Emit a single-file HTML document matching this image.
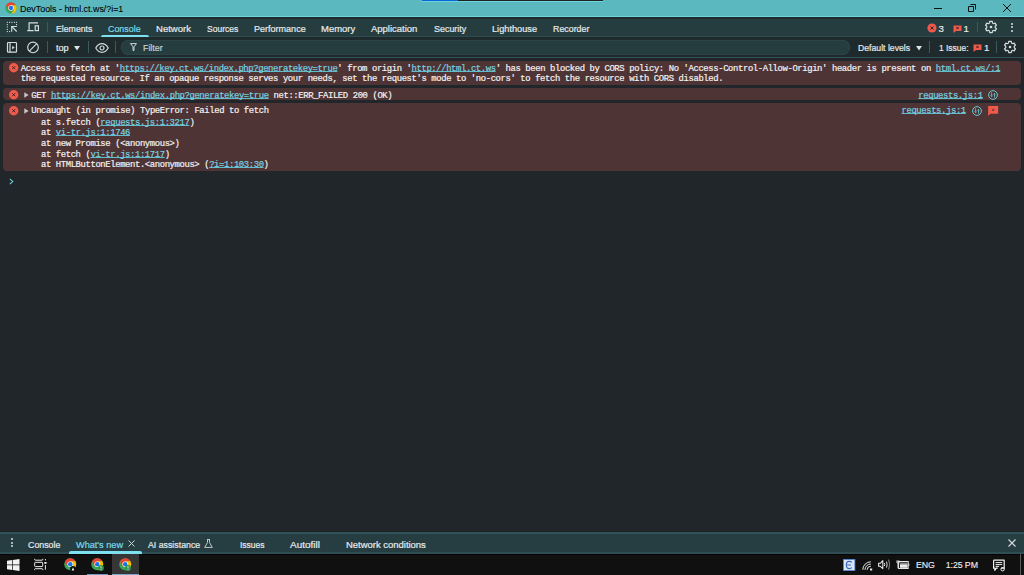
<!DOCTYPE html>
<html><head><meta charset="utf-8">
<style>
html,body{margin:0;padding:0;}
body{width:1024px;height:575px;overflow:hidden;position:relative;background:#202629;font-family:"Liberation Sans",sans-serif;}
.a{position:absolute;}
.t{position:absolute;white-space:pre;line-height:10px;font-size:9px;color:#e3e3e3;-webkit-text-stroke:0.2px currentColor;}
.m{position:absolute;white-space:pre;font-family:"Liberation Mono",monospace;font-size:8.9px;letter-spacing:-0.38px;line-height:10px;color:#f2f2f2;-webkit-text-stroke:0.2px currentColor;}
.lk{color:#74d2e0;text-decoration:underline;text-underline-offset:0.3px;text-decoration-skip-ink:none;text-decoration-color:#62bccb;}
.sep{position:absolute;width:1px;background:#3a5a5e;}
svg{position:absolute;overflow:visible;}
</style></head><body>

<!-- title bar -->
<div class="a" style="left:0;top:0;width:1024px;height:17px;background:#5cb8bf;"></div>
<div class="a" style="left:0;top:16px;width:1024px;height:1px;background:#6dd3dc;"></div>
<div class="a" style="left:422px;top:0;width:36px;height:1px;background:#0b62d6;"></div>
<div class="a" style="left:458px;top:0;width:145px;height:1px;background:#222;"></div>
<div class="a" style="left:422px;top:1px;width:181px;height:1px;background:#6ad6e0;"></div>
<svg style="left:5px;top:2px" width="12" height="12" viewBox="0 0 24 24">
  <circle cx="12" cy="12" r="11.5" fill="#34a853"/>
  <path d="M12 .5A11.5 11.5 0 0 1 21.96 6.25L12 6.25 6.2 16.2 2.04 6.25A11.5 11.5 0 0 1 12 .5z" fill="#ea4335"/>
  <path d="M21.96 6.25A11.5 11.5 0 0 1 12 23.5L17.8 16.2 12 6.25z" fill="#fbbc04"/>
  <circle cx="12" cy="12" r="5.4" fill="#fff"/>
  <circle cx="12" cy="12" r="4.3" fill="#1a73e8"/>
</svg>
<div class="t" style="left:20.08px;top:3.85px;color:#000;font-size:9.5px;transform:scaleX(0.9340);transform-origin:0 0;-webkit-text-stroke:0.1px currentColor;">DevTools - html.ct.ws/?i=1</div>
<div class="a" style="left:934px;top:8px;width:8px;height:1px;background:#111;"></div>
<svg style="left:968px;top:4px" width="8" height="8" viewBox="0 0 8 8"><path d="M2.5 .5h5v5M.5 2.5h5v5h-5z" fill="none" stroke="#111" stroke-width="1"/></svg>
<svg style="left:1003px;top:4px" width="8" height="8" viewBox="0 0 8 8"><path d="M0 0L8 8M8 0L0 8" stroke="#111" stroke-width="1"/></svg>

<!-- main tab bar -->
<div class="a" style="left:0;top:17px;width:1024px;height:20px;background:#263d40;"></div>
<div class="a" style="left:0;top:17px;width:1024px;height:1.6px;background:#1f2b2d;"></div>
<div class="a" style="left:0;top:36px;width:1024px;height:1px;background:#2f4b4f;"></div>

<!-- toolbar -->
<div class="a" style="left:0;top:37px;width:1024px;height:20px;background:#1f2a2c;"></div>
<div class="a" style="left:0;top:57px;width:1024px;height:1px;background:#33535a;"></div>


<!-- tabs content -->
<div class="t" style="left:56.19px;top:23.77px;color:#e6ebec;font-size:9.6px;transform:scaleX(0.9100);transform-origin:0 0;">Elements</div>
<div class="t" style="left:107.98px;top:23.77px;color:#76dbeb;font-size:9.6px;transform:scaleX(0.9261);transform-origin:0 0;">Console</div>
<div class="t" style="left:156.35px;top:23.77px;color:#e6ebec;font-size:9.6px;transform:scaleX(0.9929);transform-origin:0 0;">Network</div>
<div class="t" style="left:206.60px;top:23.77px;color:#e6ebec;font-size:9.6px;transform:scaleX(0.8864);transform-origin:0 0;">Sources</div>
<div class="t" style="left:254.08px;top:23.77px;color:#e6ebec;font-size:9.6px;transform:scaleX(0.9409);transform-origin:0 0;">Performance</div>
<div class="t" style="left:321.36px;top:23.77px;color:#e6ebec;font-size:9.6px;transform:scaleX(0.9870);transform-origin:0 0;">Memory</div>
<div class="t" style="left:371.26px;top:23.77px;color:#e6ebec;font-size:9.6px;transform:scaleX(0.9883);transform-origin:0 0;">Application</div>
<div class="t" style="left:433.88px;top:23.77px;color:#e6ebec;font-size:9.6px;transform:scaleX(0.9308);transform-origin:0 0;">Security</div>
<div class="t" style="left:491.97px;top:23.77px;color:#e6ebec;font-size:9.6px;transform:scaleX(0.9585);transform-origin:0 0;">Lighthouse</div>
<div class="t" style="left:552.89px;top:23.77px;color:#e6ebec;font-size:9.6px;transform:scaleX(0.9215);transform-origin:0 0;">Recorder</div>
<div class="a" style="left:101px;top:35px;width:48px;height:2px;background:#7ee0ee;border-radius:2px 2px 0 0;"></div>

<!-- tabbar icons -->
<svg style="left:4px;top:19px" width="40" height="16" viewBox="0 0 40 16">
  <g fill="#cdd5d6">
    <rect x="2.8" y="2.8" width="1.1" height="1.1"/><rect x="5" y="2.8" width="1.1" height="1.1"/><rect x="7.3" y="2.8" width="1.1" height="1.1"/><rect x="9.9" y="2.8" width="1.1" height="1.1"/><rect x="12" y="2.8" width="1.1" height="1.1"/>
    <rect x="2.8" y="5" width="1.1" height="1.1"/><rect x="2.8" y="7.3" width="1.1" height="1.1"/><rect x="2.8" y="9.9" width="1.1" height="1.1"/><rect x="2.8" y="12" width="1.1" height="1.1"/>
    <rect x="12" y="5" width="1.1" height="1.1"/><rect x="5" y="12" width="1.1" height="1.1"/>
  </g>
  <path d="M7.7 12.8V7.5H12.9M7.9 7.7L12.7 12.5" fill="none" stroke="#d5dcdd" stroke-width="1.15"/>
  <path d="M23.2 11.7H29.6M25.1 11.7V3.9H34" fill="none" stroke="#d5dcdd" stroke-width="1.2"/>
  <rect x="31.2" y="6.8" width="3.2" height="4.8" fill="none" stroke="#d5dcdd" stroke-width="1.2"/>
</svg>
<div class="sep" style="left:47px;top:22px;height:10px;"></div>

<svg style="left:927px;top:23px" width="10" height="10" viewBox="0 0 10 10">
  <circle cx="5" cy="5" r="4.6" fill="#ef5a4b"/>
  <path d="M3.4 3.4L6.6 6.6M6.6 3.4L3.4 6.6" stroke="#2a1c1d" stroke-width="0.9"/>
</svg>
<div class="t" style="left:938.55px;top:23.77px;color:#e6ebec;font-size:9.6px;transform:scaleX(1.0000);transform-origin:0 0;">3</div>
<svg style="left:953px;top:25px" width="9" height="8" viewBox="0 0 9 8">
  <path d="M0.5 0.5h8v5.5H3L0.5 8z" fill="#ef5a4b"/>
  <path d="M3.4 1.9L5.6 4.1M5.6 1.9L3.4 4.1" stroke="#2a1c1d" stroke-width="0.9"/>
</svg>
<div class="t" style="left:963.55px;top:23.77px;color:#e6ebec;font-size:9.6px;transform:scaleX(1.0000);transform-origin:0 0;">1</div>
<div class="sep" style="left:977px;top:22px;height:10px;"></div>
<svg style="left:985.0px;top:21.0px" width="12" height="12" viewBox="0 0 12 12"><path d="M4.53 1.96L4.72 0.45L7.28 0.45L7.47 1.96L8.76 2.71L10.17 2.11L11.45 4.33L10.23 5.25L10.23 6.75L11.45 7.67L10.17 9.89L8.76 9.29L7.47 10.04L7.28 11.55L4.72 11.55L4.53 10.04L3.24 9.29L1.83 9.89L0.55 7.67L1.77 6.75L1.77 5.25L0.55 4.33L1.83 2.11L3.24 2.71Z" fill="none" stroke="#d5dcdd" stroke-width="1.2" stroke-linejoin="round"/><circle cx="6" cy="6" r="1.3" fill="#d5dcdd"/></svg>
<div class="a" style="left:1011px;top:22.6px;width:2px;height:2px;background:#d5dcdd;border-radius:1px;"></div>
<div class="a" style="left:1011px;top:26.1px;width:2px;height:2px;background:#d5dcdd;border-radius:1px;"></div>
<div class="a" style="left:1011px;top:29.7px;width:2px;height:2px;background:#d5dcdd;border-radius:1px;"></div>

<!-- toolbar content -->
<svg style="left:6px;top:41px" width="34" height="14" viewBox="0 0 34 14">
  <rect x="1.5" y="1.5" width="9" height="9.7" rx="0.8" stroke="#d5dcdd" stroke-width="1.2" fill="none"/>
  <path d="M4 1.5v9.7" stroke="#d5dcdd" stroke-width="1.2"/>
  <path d="M6.2 4.8L8.7 6.6 6.2 8.4z" fill="#d5dcdd"/>
  <circle cx="27" cy="6.4" r="5.3" stroke="#d5dcdd" stroke-width="1.15" fill="none"/>
  <path d="M23.3 10.1L30.7 2.7" stroke="#d5dcdd" stroke-width="1.15"/>
</svg>
<div class="sep" style="left:47px;top:41px;height:12px;"></div>
<div class="t" style="left:56.17px;top:42.77px;color:#e6ebec;font-size:9.6px;transform:scaleX(0.9513);transform-origin:0 0;">top</div>
<svg style="left:73.5px;top:45.5px" width="6" height="5" viewBox="0 0 6 5"><path d="M0 0h6L3 4.5z" fill="#dde3e4"/></svg>
<div class="sep" style="left:88px;top:41px;height:12px;"></div>
<svg style="left:95px;top:42.5px" width="14" height="10" viewBox="0 0 14 10">
  <path d="M0.8 5C2.5 1.8 4.8 0.7 7 0.7S11.5 1.8 13.2 5C11.5 8.2 9.2 9.3 7 9.3S2.5 8.2 0.8 5z" stroke="#cfd8d9" stroke-width="1.2" fill="none"/>
  <circle cx="7" cy="5" r="2" stroke="#cfd8d9" stroke-width="1.2" fill="none"/>
</svg>
<div class="sep" style="left:115px;top:41px;height:12px;"></div>
<div class="a" style="left:121px;top:39.6px;width:729px;height:15.4px;background:#263d40;border-radius:8px;box-shadow:inset 0 0 0 0.8px #2d484c;"></div>
<svg style="left:130px;top:43px" width="7" height="8" viewBox="0 0 7 8"><path d="M0.5 0.6h6L4 3.8V7.5H3V3.8z" fill="none" stroke="#cfd8d9" stroke-width="1"/></svg>
<div class="t" style="left:142.58px;top:42.77px;color:#c9d1d2;font-size:9.6px;transform:scaleX(0.9227);transform-origin:0 0;">Filter</div>
<div class="t" style="left:858.39px;top:42.77px;color:#e6ebec;font-size:9.6px;transform:scaleX(0.9055);transform-origin:0 0;">Default levels</div>
<svg style="left:915.5px;top:45.5px" width="6" height="5" viewBox="0 0 6 5"><path d="M0 0h6L3 4.5z" fill="#dde3e4"/></svg>
<div class="sep" style="left:929px;top:41px;height:12px;"></div>
<div class="t" style="left:938.60px;top:42.77px;color:#e6ebec;font-size:9.6px;transform:scaleX(0.8780);transform-origin:0 0;">1 Issue:</div>
<svg style="left:973px;top:44px" width="9" height="8" viewBox="0 0 9 8">
  <path d="M0.5 0.5h8v5.5H3L0.5 8z" fill="#ef5a4b"/>
  <path d="M3.4 1.9L5.6 4.1M5.6 1.9L3.4 4.1" stroke="#2a1c1d" stroke-width="0.9"/>
</svg>
<div class="t" style="left:984.05px;top:42.77px;color:#e6ebec;font-size:9.6px;transform:scaleX(1.0000);transform-origin:0 0;">1</div>
<div class="sep" style="left:996px;top:41px;height:12px;"></div>
<svg style="left:1003.5px;top:41.3px" width="12" height="12" viewBox="0 0 12 12"><path d="M4.53 1.96L4.72 0.45L7.28 0.45L7.47 1.96L8.76 2.71L10.17 2.11L11.45 4.33L10.23 5.25L10.23 6.75L11.45 7.67L10.17 9.89L8.76 9.29L7.47 10.04L7.28 11.55L4.72 11.55L4.53 10.04L3.24 9.29L1.83 9.89L0.55 7.67L1.77 6.75L1.77 5.25L0.55 4.33L1.83 2.11L3.24 2.71Z" fill="none" stroke="#d5dcdd" stroke-width="1.2" stroke-linejoin="round"/><circle cx="6" cy="6" r="1.3" fill="#d5dcdd"/></svg>

<!-- console messages -->
<div class="a" style="left:3px;top:61px;width:1018px;height:23.5px;background:#4f3435;border-radius:4px;"></div>
<div class="a" style="left:3px;top:88px;width:1018px;height:12px;background:#4f3435;border-radius:4px;"></div>
<div class="a" style="left:3px;top:103.4px;width:1018px;height:67.2px;background:#4f3435;border-radius:4px;"></div>
<svg style="left:8.6px;top:63.0px" width="9.4" height="9.4" viewBox="0 0 10 10"><circle cx="5" cy="5" r="5" fill="#ef5a4b"/><path d="M3.4 3.4L6.6 6.6M6.6 3.4L3.4 6.6" stroke="#2a1c1d" stroke-width="0.9"/></svg>
<svg style="left:8.7px;top:89.6px" width="9.4" height="9.4" viewBox="0 0 10 10"><circle cx="5" cy="5" r="5" fill="#ef5a4b"/><path d="M3.4 3.4L6.6 6.6M6.6 3.4L3.4 6.6" stroke="#2a1c1d" stroke-width="0.9"/></svg>
<svg style="left:8.7px;top:105.7px" width="9.4" height="9.4" viewBox="0 0 10 10"><circle cx="5" cy="5" r="5" fill="#ef5a4b"/><path d="M3.4 3.4L6.6 6.6M6.6 3.4L3.4 6.6" stroke="#2a1c1d" stroke-width="0.9"/></svg>
<div class="m" style="left:20.8px;top:63.93px;">Access to fetch at '<span class="lk">https://key.ct.ws/index.php?generatekey=true</span>' from origin '<span class="lk">http://html.ct.ws</span>' has been blocked by CORS policy: No 'Access-Control-Allow-Origin' header is present on <span class="lk">html.ct.ws/:1</span></div>
<div class="m" style="left:20.8px;top:74.03px;">the requested resource. If an opaque response serves your needs, set the request's mode to 'no-cors' to fetch the resource with CORS disabled.</div>
<svg style="left:24.3px;top:92.2px" width="5" height="6" viewBox="0 0 5 6"><path d="M0.3 0.3L4.6 3 0.3 5.7z" fill="#c8c8c8"/></svg>
<div class="m" style="left:31.2px;top:90.73px;">GET <span class="lk">https://key.ct.ws/index.php?generatekey=true</span> net::ERR_FAILED 200 (OK)</div>
<div class="m" style="left:918.3px;top:90.73px;"><span class="lk">requests.js:1</span></div>
<svg style="left:24.3px;top:108px" width="5" height="6" viewBox="0 0 5 6"><path d="M0.3 0.3L4.6 3 0.3 5.7z" fill="#c8c8c8"/></svg>
<div class="m" style="left:31.2px;top:106.23px;">Uncaught (in promise) TypeError: Failed to fetch</div>
<div class="m" style="left:41px;top:117.53px;">at s.fetch (<span class="lk">requests.js:1:3217</span>)</div>
<div class="m" style="left:41px;top:128.03px;">at <span class="lk">vi-tr.js:1:1746</span></div>
<div class="m" style="left:41px;top:138.83px;">at new Promise (&lt;anonymous&gt;)</div>
<div class="m" style="left:41px;top:149.63px;">at fetch (<span class="lk">vi-tr.js:1:1717</span>)</div>
<div class="m" style="left:41px;top:160.43px;">at HTMLButtonElement.&lt;anonymous&gt; (<span class="lk">?i=1:103:30</span>)</div>
<div class="m" style="left:901.5px;top:106.23px;"><span class="lk">requests.js:1</span></div>
<svg style="left:988px;top:90.4px" width="10" height="10" viewBox="0 0 10 10"><circle cx="5" cy="5" r="4.4" fill="none" stroke="#66c8d6" stroke-width="1"/><path d="M3.6 2.3v4.2M2.7 5.5l0.9 1.1 0.9-1.1M6.5 7.7V3.5M5.6 4.5l0.9-1.1 0.9 1.1" fill="none" stroke="#66c8d6" stroke-width="0.8"/></svg>
<svg style="left:971.7px;top:105.7px" width="10" height="10" viewBox="0 0 10 10"><circle cx="5" cy="5" r="4.4" fill="none" stroke="#66c8d6" stroke-width="1"/><path d="M3.6 2.3v4.2M2.7 5.5l0.9 1.1 0.9-1.1M6.5 7.7V3.5M5.6 4.5l0.9-1.1 0.9 1.1" fill="none" stroke="#66c8d6" stroke-width="0.8"/></svg>
<svg style="left:988px;top:105.7px" width="10.3" height="10" viewBox="0 0 10 10"><path d="M0 0h10v7.8H2.2L0 10z" fill="#ef5a4b"/><path d="M3.9 2.7L6.1 4.9M6.1 2.7L3.9 4.9" stroke="#3b2a2b" stroke-width="0.75"/></svg>
<svg style="left:9px;top:178px" width="5" height="7" viewBox="0 0 5 7"><path d="M0.8 0.8L3.8 3.5 0.8 6.2" fill="none" stroke="#6cc6d4" stroke-width="1.1"/></svg>

<!-- drawer -->
<div class="a" style="left:0;top:532px;width:1024px;height:1.5px;background:#34525a;"></div>
<div class="a" style="left:0;top:533.5px;width:1024px;height:18.5px;background:#263d41;"></div>
<div class="a" style="left:0;top:552px;width:1024px;height:2px;background:#2f4d52;"></div>
<div class="a" style="left:10.8px;top:538.4px;width:2px;height:2px;background:#d5dcdd;border-radius:1px;"></div>
<div class="a" style="left:10.8px;top:541.6px;width:2px;height:2px;background:#d5dcdd;border-radius:1px;"></div>
<div class="a" style="left:10.8px;top:544.9px;width:2px;height:2px;background:#d5dcdd;border-radius:1px;"></div>
<div class="t" style="left:28.19px;top:539.77px;color:#e6ebec;font-size:9.6px;transform:scaleX(0.9205);transform-origin:0 0;">Console</div>
<div class="t" style="left:75.82px;top:539.77px;color:#76dbeb;font-size:9.6px;transform:scaleX(0.9545);transform-origin:0 0;">What's new</div>
<svg style="left:128px;top:540px" width="7" height="7" viewBox="0 0 7 7"><path d="M0.5 0.5L6.5 6.5M6.5 0.5L0.5 6.5" stroke="#cfd8d9" stroke-width="1"/></svg>
<div class="a" style="left:69px;top:551px;width:73px;height:2.5px;background:#7ee0ee;border-radius:2px 2px 0 0;"></div>
<div class="t" style="left:148.39px;top:539.77px;color:#e6ebec;font-size:9.6px;transform:scaleX(0.9142);transform-origin:0 0;">AI assistance</div>
<svg style="left:204px;top:539px" width="9" height="9" viewBox="0 0 9 9"><path d="M3 0.5h3M3.5 0.5v3L0.7 8.4h7.6L5.5 3.5v-3" fill="none" stroke="#cfd8d9" stroke-width="0.9"/></svg>
<div class="t" style="left:240.10px;top:539.77px;color:#e6ebec;font-size:9.6px;transform:scaleX(0.8865);transform-origin:0 0;">Issues</div>
<div class="t" style="left:290.43px;top:539.77px;color:#e6ebec;font-size:9.6px;transform:scaleX(1.0382);transform-origin:0 0;">Autofill</div>
<div class="t" style="left:346.16px;top:539.77px;color:#e6ebec;font-size:9.6px;transform:scaleX(0.9852);transform-origin:0 0;">Network conditions</div>
<svg style="left:1008px;top:539px" width="8" height="8" viewBox="0 0 8 8"><path d="M0.5 0.5L7.5 7.5M7.5 0.5L0.5 7.5" stroke="#d5dcdd" stroke-width="1.1"/></svg>

<!-- taskbar -->
<div class="a" style="left:0;top:554px;width:1024px;height:21px;background:#101010;"></div>
<div class="a" style="left:0;top:554px;width:1024px;height:1px;background:#050505;"></div>
<div class="a" style="left:0;top:531px;width:1024px;height:1px;background:#1b2224;"></div>
<svg style="left:7px;top:558.5px" width="12.5" height="12" viewBox="0 0 12.5 12"><path d="M0 1.7L5.2 1V5.6H0zM5.9 0.9L12.5 0V5.6H5.9zM0 6.3H5.2V11L0 10.3zM5.9 6.3H12.5V12L5.9 11.1z" fill="#f2f2f2"/></svg>
<svg style="left:30px;top:555px" width="20" height="19" viewBox="0 0 20 19">
  <path d="M4.6 3.8v0.6q0 0.8 0.8 0.8h6.6q0.8 0 0.8-0.8V3.8M4.6 15.1v-0.6q0-0.8 0.8-0.8h6.6q0.8 0 0.8 0.8v0.6" fill="none" stroke="#ececec" stroke-width="1"/>
  <rect x="4.7" y="7.3" width="8" height="4.3" rx="0.7" fill="none" stroke="#ececec" stroke-width="1"/>
  <path d="M15.4 4v1.3M15.4 10.1v4.6" stroke="#ececec" stroke-width="1"/>
  <rect x="14.3" y="7" width="2.3" height="1.8" fill="#ececec"/>
</svg>
<svg style="left:63.7px;top:558.3px" width="12.5" height="12.5" viewBox="0 0 24 24">
  <circle cx="12" cy="12" r="11.5" fill="#34a853"/>
  <path d="M12 .5A11.5 11.5 0 0 1 21.96 6.25L12 6.25 6.2 16.2 2.04 6.25A11.5 11.5 0 0 1 12 .5z" fill="#ea4335"/>
  <path d="M21.96 6.25A11.5 11.5 0 0 1 12 23.5L17.8 16.2 12 6.25z" fill="#fbbc04"/>
  <circle cx="12" cy="12" r="5.4" fill="#fff"/>
  <circle cx="12" cy="12" r="4.3" fill="#1a73e8"/>
</svg>
<svg style="left:91px;top:558.3px" width="12.5" height="12.5" viewBox="0 0 24 24">
  <circle cx="12" cy="12" r="11.5" fill="#34a853"/>
  <path d="M12 .5A11.5 11.5 0 0 1 21.96 6.25L12 6.25 6.2 16.2 2.04 6.25A11.5 11.5 0 0 1 12 .5z" fill="#ea4335"/>
  <path d="M21.96 6.25A11.5 11.5 0 0 1 12 23.5L17.8 16.2 12 6.25z" fill="#fbbc04"/>
  <circle cx="12" cy="12" r="5.4" fill="#fff"/>
  <circle cx="12" cy="12" r="4.3" fill="#1a73e8"/>
</svg>
<div class="a" style="left:111.7px;top:554px;width:27.2px;height:19.5px;background:#363636;"></div>
<svg style="left:118.8px;top:558.3px" width="12.5" height="12.5" viewBox="0 0 24 24">
  <circle cx="12" cy="12" r="11.5" fill="#34a853"/>
  <path d="M12 .5A11.5 11.5 0 0 1 21.96 6.25L12 6.25 6.2 16.2 2.04 6.25A11.5 11.5 0 0 1 12 .5z" fill="#ea4335"/>
  <path d="M21.96 6.25A11.5 11.5 0 0 1 12 23.5L17.8 16.2 12 6.25z" fill="#fbbc04"/>
  <circle cx="12" cy="12" r="5.4" fill="#fff"/>
  <circle cx="12" cy="12" r="4.3" fill="#1a73e8"/>
</svg>
<svg style="left:69.5px;top:565.5px" width="6" height="6" viewBox="0 0 6 6"><circle cx="3" cy="3" r="2.9" fill="#0a0a0a"/><path d="M3 1.3L4.4 4.5H1.6z" fill="#eee"/></svg>
<svg style="left:97.5px;top:565px" width="6" height="6" viewBox="0 0 6 6"><circle cx="3" cy="3" r="2.9" fill="#2a9a48"/><circle cx="3" cy="2.1" r="0.8" fill="#e9c9b4"/><path d="M1.8 5L2.3 3.3H3.7L4.2 5z" fill="#8a8fa8"/></svg>
<svg style="left:125.3px;top:565px" width="6" height="6" viewBox="0 0 6 6"><circle cx="3" cy="3" r="2.9" fill="#2a9a48"/><circle cx="3" cy="2.1" r="0.8" fill="#e9c9b4"/><path d="M1.8 5L2.3 3.3H3.7L4.2 5z" fill="#8a8fa8"/></svg>
<div class="a" style="left:87px;top:573.5px;width:21px;height:1.5px;background:#6f9bc6;"></div>
<div class="a" style="left:111.7px;top:573.5px;width:27.2px;height:1.5px;background:#7aa5d0;"></div>

<svg style="left:842.5px;top:558.7px" width="12.3" height="12" viewBox="0 0 12.3 12"><rect x="0.4" y="0.4" width="11.5" height="11.2" fill="#d8e6f7" stroke="#4f86d6" stroke-width="0.8"/><path d="M8.8 3.3Q7.9 2.4 6.3 2.4 3.3 2.4 3.3 6 3.3 9.6 6.3 9.6 7.9 9.6 8.8 8.7M3.9 6H8" fill="none" stroke="#3a66b8" stroke-width="1.1"/></svg>
<svg style="left:862px;top:560.5px" width="11" height="9.5" viewBox="0 0 11 9.5"><path d="M0.8 8.8A8 8 0 0 1 8.8 0.8M3 8.8A5.8 5.8 0 0 1 8.8 3M5.2 8.8A3.6 3.6 0 0 1 8.8 5.2" fill="none" stroke="#e8e8e8" stroke-width="1"/><rect x="8" y="7.5" width="2.2" height="2" fill="#e8e8e8"/></svg>
<svg style="left:876px;top:557px" width="16" height="15" viewBox="0 0 16 15"><path d="M2.6 6.3H4.3L6.8 3.6V11.6L4.3 9.3H2.6z" fill="none" stroke="#e8e8e8" stroke-width="1.1" stroke-linejoin="round"/><path d="M8.4 6.1Q9.1 7.5 8.4 9M10.5 4.6Q11.8 7.5 10.5 10.6" fill="none" stroke="#e8e8e8" stroke-width="1"/><path d="M12.6 2.6Q14.6 7.5 12.6 12.6" fill="none" stroke="#9a9a9a" stroke-width="0.9"/></svg>
<svg style="left:876px;top:557px" width="36" height="15" viewBox="0 0 36 15"><path d="M21.1 3.2v1.6M22.9 3.2v1.6M20.6 4.9h2.8l-1.4 2z" fill="none" stroke="#e8e8e8" stroke-width="0.9"/><path d="M22 6.8v4.5" stroke="#e8e8e8" stroke-width="1"/><rect x="22.6" y="4.5" width="9.6" height="7" fill="none" stroke="#e8e8e8" stroke-width="1"/><rect x="24" y="7.2" width="7.6" height="3.6" fill="#ececec"/><rect x="24" y="5.5" width="7.6" height="1.7" fill="#8a8a8a"/><path d="M32.8 6.6v2.2" stroke="#e8e8e8" stroke-width="1"/></svg>
<div class="t" style="left:916px;top:559.8px;color:#f4f4f4;font-size:8.8px;letter-spacing:-0.1px;-webkit-text-stroke:0.1px currentColor;">ENG</div>
<div class="t" style="left:945.8px;top:559.8px;color:#f4f4f4;font-size:8.8px;letter-spacing:-0.1px;-webkit-text-stroke:0.1px currentColor;">1:25 PM</div>
<svg style="left:992px;top:558.5px" width="14" height="13" viewBox="0 0 14 13"><path d="M1.6 1.2H12.2V9.2H9M5.8 9.2H4.2L2.8 11.3V9.2H1.6V1.2" fill="none" stroke="#f2f2f2" stroke-width="1.2" stroke-linejoin="round"/><path d="M3.6 3.6h6.6M3.6 5.6h6.6M3.6 7.4h3.5" stroke="#f2f2f2" stroke-width="1"/><circle cx="10.6" cy="10.2" r="1.7" fill="none" stroke="#f2f2f2" stroke-width="1"/></svg>
<div class="a" style="left:1020px;top:554px;width:1px;height:21px;background:#5a5a5a;"></div>
</body></html>
